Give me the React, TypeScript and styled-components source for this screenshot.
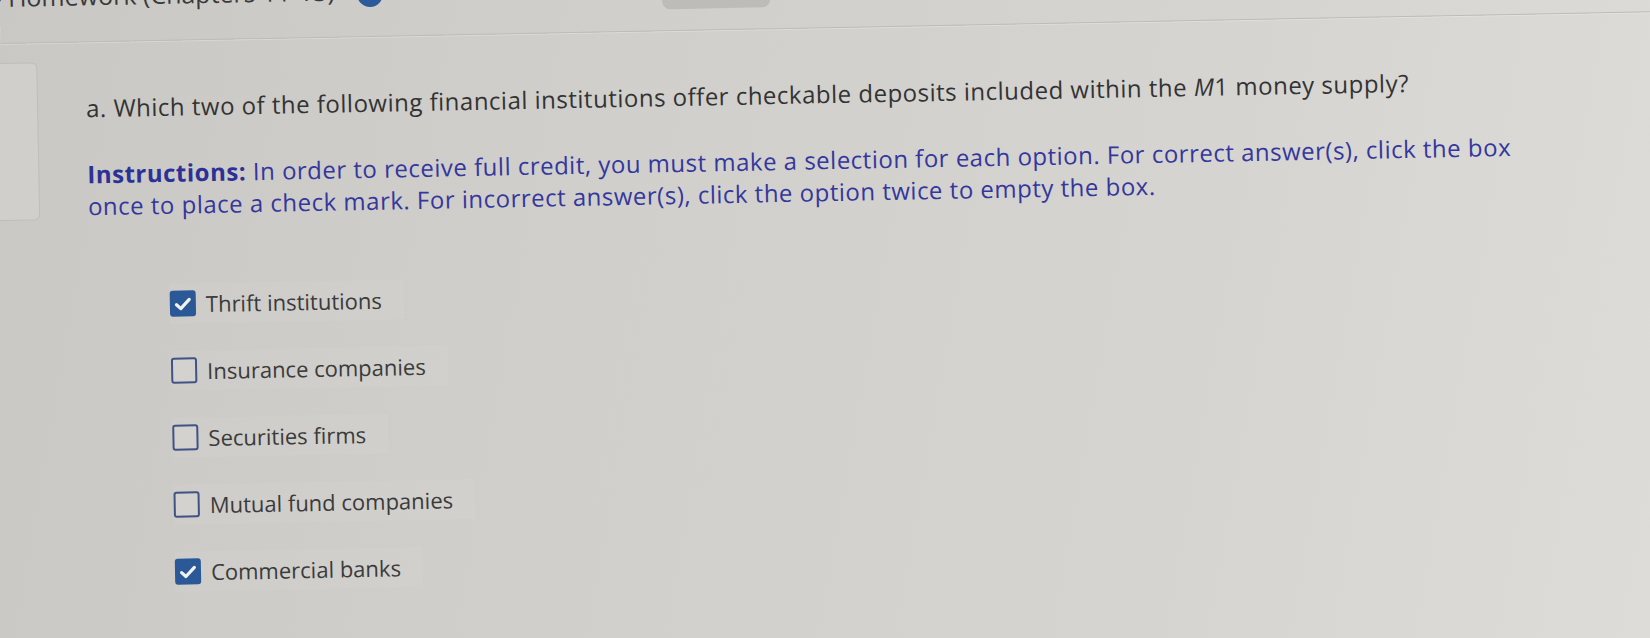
import styled, { createGlobalStyle } from 'styled-components';

const GlobalStyle = createGlobalStyle`
  html, body {
    margin: 0;
    padding: 0;
    height: 100%;
    overflow: hidden;
  }
  body {
    background: linear-gradient(100deg, #c9c8c5 0%, #d0cfcc 35%, #d5d4d1 70%, #dddcd9 100%);
    font-family: "Open Sans", Lato, sans-serif;
  }
`;

const Page = styled.div`
  width: 1700px;
  height: 700px;
  transform: rotate(-1.1deg);
  transform-origin: 0 0;
`;

const Header = styled.div`
  display: flex;
  align-items: flex-end;
  height: 44px;
  padding-bottom: 36px;
  box-sizing: border-box;
  border-bottom: 1px solid #bdbcb9;
  box-shadow: 0 1px 0 rgba(255, 255, 255, 0.25);
`;

const Title = styled.div`
  font-size: 25px;
  line-height: 20px;
  color: #3a3a3a;
  margin-left: -6px;
  white-space: nowrap;
`;

const Badge = styled.span`
  display: inline-block;
  width: 26px;
  height: 26px;
  border-radius: 50%;
  background: #2c5a9a;
  margin-left: 22px;
  margin-bottom: -7px;
`;

const HeaderButton = styled.div`
  width: 108px;
  height: 40px;
  margin-left: 279px;
  margin-bottom: -15px;
  border-radius: 0 0 8px 8px;
  background: #bdbcb9;
`;

const Body = styled.div`
  display: flex;
  align-items: flex-start;
  padding-top: 12px;
`;

const SideCard = styled.div`
  width: 70px;
  height: 156px;
  margin-left: -36px;
  margin-top: 7px;
  border: 1px solid #bfbeba;
  border-radius: 6px;
  background: #d0cfcc;
  flex-shrink: 0;
`;

const Content = styled.div`
  margin-left: 48px;
  padding-top: 39px;
`;

const Question = styled.p`
  margin: 0;
  font-size: 24px;
  line-height: 30px;
  letter-spacing: 0.5px;
  color: #333333;
`;

const Emph = styled.i`
  font-style: italic;
`;

const Instructions = styled.p`
  margin: 35px 0 0;
  width: 1460px;
  font-size: 24px;
  line-height: 32px;
  letter-spacing: 0.5px;
  color: #34379c;
`;

const Strong = styled.b`
  font-weight: 700;
  color: #2d3196;
`;

const OptionList = styled.div`
  display: flex;
  flex-direction: column;
  gap: 27px;
  margin-top: 63px;
  margin-left: 80px;
`;

const Option = styled.label`
  display: flex;
  align-items: center;
  gap: 10px;
  height: 40px;
  width: fit-content;
  padding-right: 22px;
  font-size: 22px;
  color: #3b3b3b;
  background: rgba(255, 255, 255, 0.05);
`;

const Box = styled.span<{ $checked?: boolean }>`
  display: flex;
  align-items: center;
  justify-content: center;
  width: 26px;
  height: 26px;
  box-sizing: border-box;
  border-radius: 3px;
  border: 2px solid ${(p) => (p.$checked ? '#2b5896' : '#405384')};
  background: ${(p) => (p.$checked ? '#2b5896' : '#d3d2cf')};
`;

const options = [
  { label: 'Thrift institutions', checked: true },
  { label: 'Insurance companies', checked: false },
  { label: 'Securities firms', checked: false },
  { label: 'Mutual fund companies', checked: false },
  { label: 'Commercial banks', checked: true },
];

function Check() {
  return (
    <svg width="18" height="15" viewBox="0 0 16 14">
      <path d="M2 7.5 L6 11.2 L14 2.8" fill="none" stroke="#f2f2f0" strokeWidth="3" strokeLinecap="round" strokeLinejoin="round" />
    </svg>
  );
}

export default function App() {
  return (
    <>
      <GlobalStyle />
      <Page>
        <Header>
          <Title>› Homework (Chapters 11-13)</Title>
          <Badge />
          <HeaderButton />
        </Header>
        <Body>
          <SideCard />
          <Content>
            <Question>
              a. Which two of the following financial institutions offer checkable deposits included within the <Emph>M</Emph>1 money supply?
            </Question>
            <Instructions>
              <Strong>Instructions:</Strong> In order to receive full credit, you must make a selection for each option. For correct answer(s), click the box once to place a check mark. For incorrect answer(s), click the option twice to empty the box.
            </Instructions>
            <OptionList>
              {options.map((o) => (
                <Option key={o.label}>
                  <Box $checked={o.checked}>{o.checked && <Check />}</Box>
                  {o.label}
                </Option>
              ))}
            </OptionList>
          </Content>
        </Body>
      </Page>
    </>
  );
}
